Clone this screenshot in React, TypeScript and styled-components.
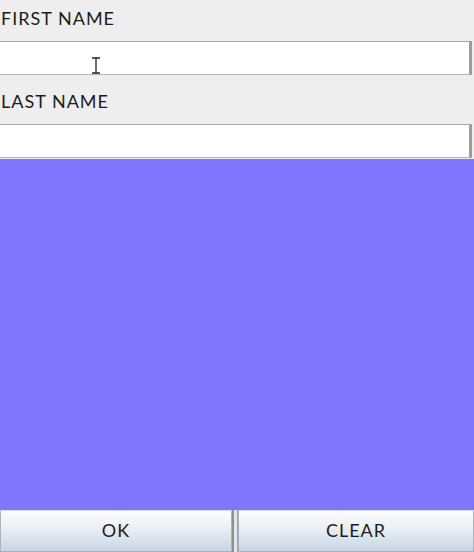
import styled, { createGlobalStyle } from 'styled-components'

// global
const GlobalStyle = createGlobalStyle`
  html, body {
    margin: 0;
    padding: 0;
    background: #eeeeee;
  }
  * {
    box-sizing: border-box;
  }
`

// styled
const Frame = styled.div`
  display: flex;
  flex-direction: column;
  width: 474px;
  height: 552px;
  background-color: #eeeeee;
  font-family: 'Comic Sans MS', 'Lato', sans-serif;
  color: #1c1c1c;
`
const Label = styled.div<{ tall?: boolean }>`
  display: flex;
  align-items: center;
  height: ${({ tall }) => (tall ? '49px' : '41px')};
  padding: ${({ tall }) => (tall ? '2px 0 0 1px' : '0 0 5px 1px')};
  font-size: 18px;
  letter-spacing: 1px;
`
const FieldWrap = styled.div`
  position: relative;
`
const Field = styled.input`
  display: block;
  width: 472px;
  height: 34px;
  margin: 0;
  padding: 0 6px;
  border: 1px solid #b4b4b4;
  border-top-color: #a8a8a8;
  border-right: 3px solid #9c9c9c;
  border-left: none;
  background: #ffffff;
  font-family: inherit;
  font-size: 16px;
  outline: none;
  cursor: text;
`
// mouse pointer caught in the screenshot
const Pointer = styled.svg`
  position: absolute;
  left: 91px;
  top: 16px;
  pointer-events: none;
`
const Canvas = styled.div`
  flex: 1;
  margin-top: 1px;
  background-color: #7f76fe;
`
const ButtonRow = styled.div`
  display: flex;
  height: 42px;
`
const Button = styled.button<{ grow: number }>`
  flex: ${({ grow }) => grow};
  height: 42px;
  margin: 0;
  padding: 0 0 2px;
  border: 1px solid #a9b3bd;
  border-top: 1px solid #d8dde2;
  border-radius: 0;
  background: linear-gradient(#fbfcfd 0%, #eef2f6 35%, #d6e1ec 75%, #c6d5e5 100%);
  font-family: inherit;
  font-size: 18px;
  letter-spacing: 1px;
  color: #1c1c1c;
  cursor: pointer;
`
const Divider = styled.div`
  width: 6px;
  border-left: 2px solid #8e9092;
  border-right: 1px solid #9fa4a8;
  background: #e3e5e8;
`

// components
function App() {
  return (
    <>
      <GlobalStyle />
      <Frame>
        <Label>FIRST NAME</Label>
        <FieldWrap>
          <Field type="text" />
          <Pointer width="10" height="17" viewBox="0 0 10 17">
            <path
              d="M1 1h8M5 1v15M1 16h8"
              stroke="#222"
              strokeWidth="1.3"
              fill="none"
            />
          </Pointer>
        </FieldWrap>
        <Label tall>LAST NAME</Label>
        <Field type="text" />
        <Canvas />
        <ButtonRow>
          <Button grow={232}>OK</Button>
          <Divider />
          <Button grow={236}>CLEAR</Button>
        </ButtonRow>
      </Frame>
    </>
  )
}

export default App
